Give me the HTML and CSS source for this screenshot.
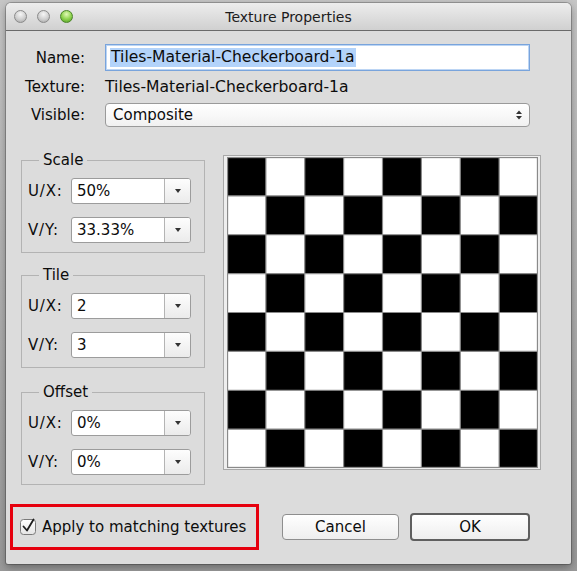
FILE: index.html
```html
<!DOCTYPE html>
<html>
<head>
<meta charset="utf-8">
<title>Texture Properties</title>
<link rel="stylesheet" href="styles.css">
</head>
<body>
<div class="window">
  <div class="titlebar">
    <div class="lights">
      <span class="light gray"></span>
      <span class="light gray"></span>
      <span class="light green"></span>
    </div>
    <div class="title">Texture Properties</div>
    <div></div>
  </div>
  <div class="content">
    <div class="form">
      <span class="lbl">Name:</span>
      <div class="input"><span class="sel">Tiles-Material-Checkerboard-1a</span></div>
      <span class="lbl">Texture:</span>
      <div class="value">Tiles-Material-Checkerboard-1a</div>
      <span class="lbl">Visible:</span>
      <div class="select">
        <span>Composite</span>
        <svg class="updown" width="6" height="10" viewBox="0 0 6 10"><path d="M0 4 L3 0.5 L6 4Z M0 6 L3 9.5 L6 6Z" fill="#333"/></svg>
      </div>
    </div>

    <div class="middle">
      <div class="groups">
        <fieldset class="group">
          <legend>Scale</legend>
          <div class="frow"><span class="flbl">U/X:</span><div class="combo"><span class="ctext">50%</span><span class="cbtn"><svg width="6" height="4" viewBox="0 0 6 4"><path d="M0 0H6L3 4Z" fill="#333"/></svg></span></div></div>
          <div class="frow"><span class="flbl">V/Y:</span><div class="combo"><span class="ctext">33.33%</span><span class="cbtn"><svg width="6" height="4" viewBox="0 0 6 4"><path d="M0 0H6L3 4Z" fill="#333"/></svg></span></div></div>
        </fieldset>
        <fieldset class="group">
          <legend>Tile</legend>
          <div class="frow"><span class="flbl">U/X:</span><div class="combo"><span class="ctext">2</span><span class="cbtn"><svg width="6" height="4" viewBox="0 0 6 4"><path d="M0 0H6L3 4Z" fill="#333"/></svg></span></div></div>
          <div class="frow"><span class="flbl">V/Y:</span><div class="combo"><span class="ctext">3</span><span class="cbtn"><svg width="6" height="4" viewBox="0 0 6 4"><path d="M0 0H6L3 4Z" fill="#333"/></svg></span></div></div>
        </fieldset>
        <fieldset class="group">
          <legend>Offset</legend>
          <div class="frow"><span class="flbl">U/X:</span><div class="combo"><span class="ctext">0%</span><span class="cbtn"><svg width="6" height="4" viewBox="0 0 6 4"><path d="M0 0H6L3 4Z" fill="#333"/></svg></span></div></div>
          <div class="frow"><span class="flbl">V/Y:</span><div class="combo"><span class="ctext">0%</span><span class="cbtn"><svg width="6" height="4" viewBox="0 0 6 4"><path d="M0 0H6L3 4Z" fill="#333"/></svg></span></div></div>
        </fieldset>
      </div>
      <div class="board">
        <svg width="311" height="311" viewBox="0 0 8 8" preserveAspectRatio="none">
          <defs>
            <pattern id="chk" x="0" y="0" width="2" height="2" patternUnits="userSpaceOnUse">
              <rect x="0" y="0" width="1" height="1" fill="#000"/>
              <rect x="1" y="1" width="1" height="1" fill="#000"/>
            </pattern>
          </defs>
          <rect x="0" y="0" width="8" height="8" fill="#fff"/>
          <rect x="0" y="0" width="8" height="8" fill="url(#chk)"/>
          <path d="M1 0V8M2 0V8M3 0V8M4 0V8M5 0V8M6 0V8M7 0V8M0 1H8M0 2H8M0 3H8M0 4H8M0 5H8M0 6H8M0 7H8" stroke="#8a8a8a" stroke-width="0.03" fill="none"/>
          <rect x="0.015" y="0.015" width="7.97" height="7.97" stroke="#8a8a8a" stroke-width="0.03" fill="none"/>
        </svg>
      </div>
    </div>

    <div class="bottom">
      <div class="highlight">
        <svg class="check" width="17" height="18" viewBox="0 0 17 18">
          <defs>
            <linearGradient id="cbg" x1="0" y1="0" x2="0" y2="1">
              <stop offset="0" stop-color="#ffffff"/>
              <stop offset="1" stop-color="#e4e4e4"/>
            </linearGradient>
          </defs>
          <rect x="0.5" y="2.5" width="15" height="15" rx="3" fill="url(#cbg)" stroke="#7a7a7a"/>
          <path d="M3.5 9.5 L7 13.5 L13.5 2.5" fill="none" stroke="#1e1e1e" stroke-width="1.8" stroke-linecap="round" stroke-linejoin="round"/>
        </svg>
        <span>Apply to matching textures</span>
      </div>
      <div class="buttons">
        <button class="btn">Cancel</button>
        <button class="btn default">OK</button>
      </div>
    </div>
  </div>
</div>
</body>
</html>
```

FILE: styles.css
```css
* { box-sizing: border-box; }
html, body { margin: 0; }
body {
  width: 577px;
  height: 571px;
  overflow: hidden;
  padding: 3px 6px 0 6px;
  background: linear-gradient(#c6c6c6, #9a9a9a);
  font-family: "DejaVu Sans", "Liberation Sans", sans-serif;
  font-size: 15px;
  color: #0c0c0c;
}
.window {
  width: 565px;
  height: 561px;
  background: #dcdcdc;
  border-radius: 5px 5px 2px 2px;
  box-shadow: 0 0 0 1px rgba(0,0,0,0.22), 0 3px 8px rgba(0,0,0,0.35);
  display: flex;
  flex-direction: column;
  overflow: hidden;
}
.titlebar {
  flex: none;
  height: 28px;
  background: linear-gradient(#ededed, #d0d0d0);
  border-bottom: 1px solid #6a6a6a;
  display: grid;
  grid-template-columns: 1fr auto 1fr;
  align-items: center;
}
.lights { display: flex; gap: 10px; padding-left: 8px; }
.light { width: 13px; height: 13px; border-radius: 50%; display: block; }
.light.gray {
  background: radial-gradient(circle at 50% 30%, #f6f6f6 0%, #cfcfcf 55%, #a2a2a2 100%);
  border: 1px solid #8a8a8a;
}
.light.green {
  background: radial-gradient(circle at 50% 30%, #e2f8b8 0%, #92d552 50%, #4c9a20 100%);
  border: 1px solid #4a8428;
}
.title { font-size: 14px; color: #1c1c1c; }

.content {
  flex: 1;
  display: flex;
  flex-direction: column;
  padding: 13px 30px 15px 0;
}
.form {
  display: grid;
  grid-template-columns: 79px 1fr;
  column-gap: 20px;
  row-gap: 6px;
  align-items: center;
  margin-right: 11px;
}
.lbl { text-align: right; }
.input {
  height: 27px;
  background: #fff;
  border: 1px solid #79a4dc;
  box-shadow: inset 0 0 0 1px #bcd5f4;
  padding-left: 4px;
  display: flex;
  align-items: center;
  font-size: 15.6px;
}
.sel { background: #b3d3fa; line-height: 19px; padding: 0 1px; }
.value { line-height: 20px; font-size: 15.6px; }
.select {
  height: 24px;
  border: 1px solid #9a9a9a;
  border-radius: 4px;
  background: linear-gradient(#ffffff, #f1f1f1);
  display: flex;
  align-items: center;
  justify-content: space-between;
  padding: 0 7px 0 7px;
}

.middle {
  display: flex;
  align-items: flex-start;
  margin-top: 24px;
  margin-left: 15px;
}
.groups { display: flex; flex-direction: column; width: 184px; }
.group {
  margin: 0;
  min-width: 0;
  padding: 9px 13px 9px 6px;
  border: 1px solid #b3b3b3;
}
.group + .group { margin-top: 13px; }
.group:last-child { margin-top: 15px; }
.group legend {
  padding: 0 4px;
  margin-left: 11px;
  line-height: 18px;
}
.frow { display: flex; align-items: center; height: 26px; }
.frow + .frow { margin-top: 13px; }
.flbl { width: 43px; flex: none; letter-spacing: 0.8px; }
.combo {
  flex: 1;
  height: 26px;
  display: flex;
  border: 1px solid #9c9c9c;
  border-radius: 3px;
  background: #fff;
  overflow: hidden;
}
.ctext { flex: 1; padding-left: 5px; line-height: 24px; }
.cbtn {
  width: 26px;
  flex: none;
  border-left: 1px solid #b4b4b4;
  background: linear-gradient(#fdfdfd, #ebebeb);
  display: flex;
  align-items: center;
  justify-content: center;
}

.board {
  margin-left: 18px;
  margin-top: 4px;
  width: 318px;
  border: 1px solid #a8a8a8;
  background: #eeeeee;
  padding: 1px 2px 1px 3px;
}
.board svg { display: block; }

.bottom {
  display: flex;
  align-items: center;
  margin-top: 19px;
  margin-left: 4px;
}
.highlight {
  width: 249px;
  height: 46px;
  border: 3px solid #e6000e;
  display: flex;
  align-items: center;
  padding-left: 7px;
  gap: 5px;
}
.check { display: block; margin-top: -2px; }
.buttons { display: flex; align-items: center; gap: 11px; margin-left: 23px; }
.btn {
  font: inherit;
  color: #0c0c0c;
  width: 117px;
  height: 26px;
  padding: 0;
  border: 1px solid #8e8e8e;
  border-radius: 4px;
  background: linear-gradient(#ffffff, #eeeeee);
}
.btn.default {
  width: 120px;
  height: 28px;
  border: 2px solid #5f5f5f;
}
```
